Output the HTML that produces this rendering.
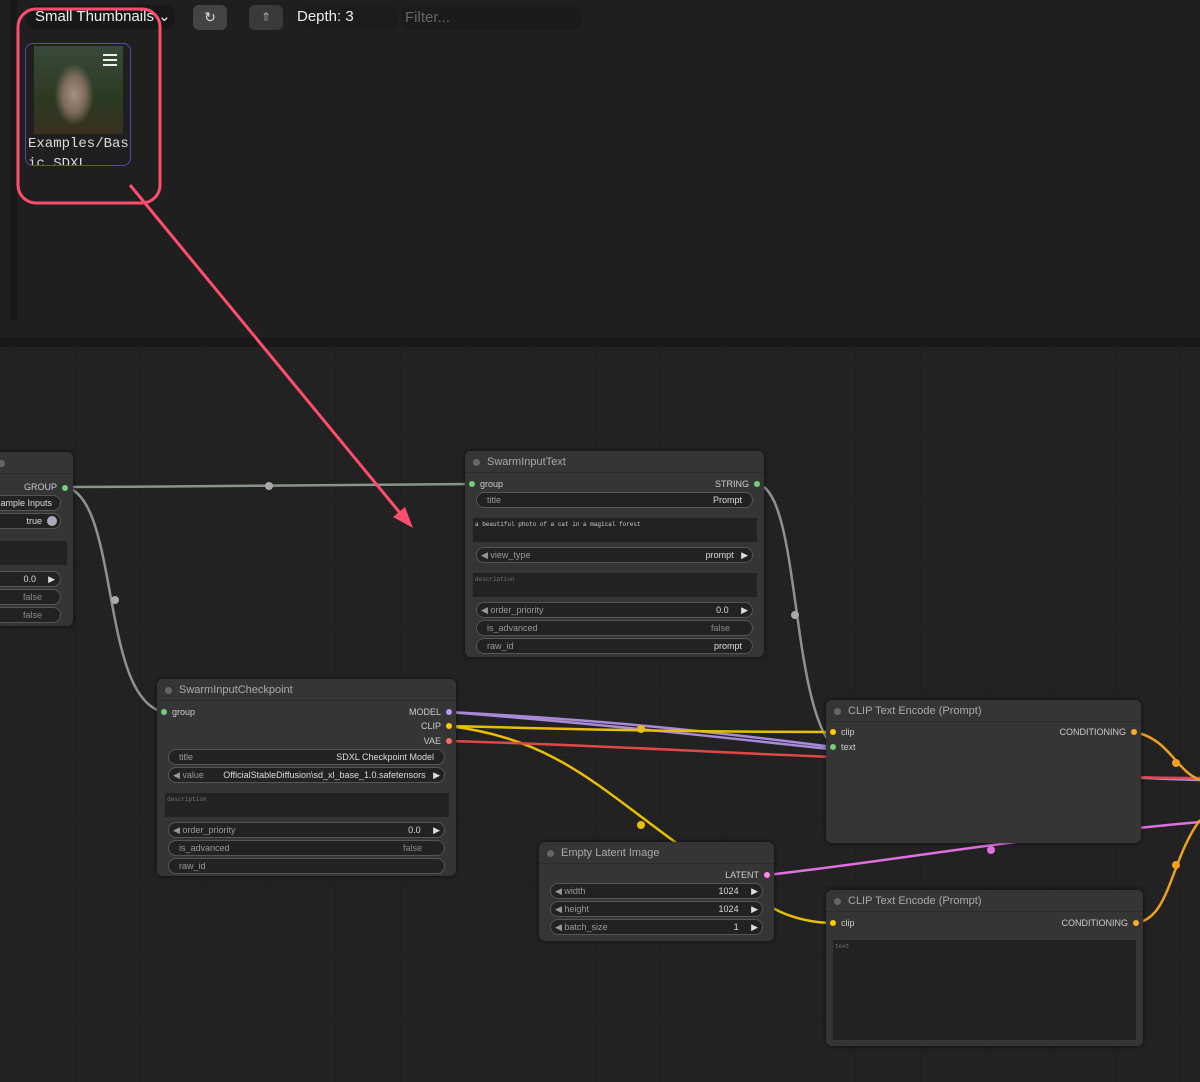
<!DOCTYPE html>
<html><head><meta charset="utf-8"><style>
*{box-sizing:border-box;margin:0;padding:0}
body{width:1200px;height:1082px;overflow:hidden;background:#202020;font-family:"Liberation Sans",sans-serif;position:relative}
.top{position:absolute;left:0;top:0;width:1200px;height:337px;background:#1f1f1f}
.band{position:absolute;left:0;top:337px;width:1200px;height:10px;background:#191919}
.canvas{position:absolute;left:0;top:347px;width:1200px;height:735px;background-color:#222;
background-image:linear-gradient(#1e1e1e 1px,transparent 1px),linear-gradient(90deg,#1e1e1e 1px,transparent 1px);background-size:65px 65px;background-position:10px 20px}
.node{position:absolute;background:#353535;border-radius:6px;box-shadow:0 0 4px #000a}
.tt{height:22px;background:#353535;border-bottom:1px solid #2c2c2c;border-radius:6px 6px 0 0;color:#aaa;font-size:11px;line-height:22px;padding-left:22px;position:relative}
.tt:before{content:"";position:absolute;left:8px;top:8px;width:7px;height:7px;border-radius:50%;background:#666}
.lab{position:absolute;font-size:9px;color:#ccc}
.dot{position:absolute;width:6px;height:6px;border-radius:50%}
.w{position:absolute;height:16px;border:1px solid #555;background:#222;border-radius:8px;font-size:9px;color:#999;line-height:14px;padding:0 10px}
.w b{font-weight:normal;color:#ddd;position:absolute;right:10px;top:0}
.ta{position:absolute;background:#222;font-family:"Liberation Mono",monospace;font-size:6px;color:#ccc;padding:3px 2px}
</style></head><body>
<div class="top"></div>
<div style="position:absolute;left:10px;top:0;width:7px;height:320px;background:#181818"></div>
<div style="position:absolute;left:27px;top:5px;width:148px;height:24px;background:#181818;border-radius:8px;color:#eee;font-size:15px;line-height:24px;padding-left:8px">Small Thumbnails ⌄</div>
<div style="position:absolute;left:193px;top:5px;width:34px;height:25px;background:#444;border-radius:6px;color:#ddd;font-size:14px;text-align:center;line-height:25px">↻</div>
<div style="position:absolute;left:249px;top:5px;width:34px;height:25px;background:#3a3a3a;border-radius:6px;color:#aaa;font-size:12px;text-align:center;line-height:25px">⇑</div>
<div style="position:absolute;left:302px;top:5px;width:96px;height:25px;background:#1c1c1c;border-radius:9px"></div>
<div style="position:absolute;left:297px;top:5px;color:#eee;font-size:15px;line-height:24px">Depth: 3</div>
<div style="position:absolute;left:401px;top:5px;width:180px;height:25px;background:#1b1b1b;border-radius:9px;color:#666;font-size:15px;line-height:25px;padding-left:4px">Filter...</div>
<div style="position:absolute;left:25px;top:43px;width:106px;height:123px;border:1px solid #5a48a8;border-radius:8px;overflow:hidden;background:#1f1f1f">
<div style="position:absolute;left:8px;top:2px;width:89px;height:88px;background:radial-gradient(ellipse 22% 35% at 45% 55%,#a89080 0,#7a6a5a 60%,transparent 100%),linear-gradient(#3a4a3a,#2a3a22 60%,#3a3020)"></div>
<div style="position:absolute;left:77px;top:10px;width:14px;height:12px;border-top:2px solid #eee;border-bottom:2px solid #eee"><div style="margin-top:3px;height:2px;background:#eee"></div></div>
<div style="position:absolute;left:2px;top:90px;font-family:'Liberation Mono',monospace;font-size:14px;color:#ddd;line-height:20px;width:104px;word-break:break-all">Examples/Basic_SDXL</div>
</div>
<div class="band"></div>
<div class="canvas"></div>
<svg style="position:absolute;left:0;top:0" width="1200" height="1082">
<g fill="none" stroke-width="2.5">
<path d="M66 487 C200 487 330 484 472 484" stroke="#8a958a"/>
<path d="M66 487 C120 500 100 700 164 712" stroke="#8a958a"/>
<path d="M757 484 C800 490 790 700 833 747" stroke="#8a958a"/>
<path d="M449 712 C600 720 700 730 833 747" stroke="#a88ad8"/>
<path d="M449 712 C800 740 1000 775 1200 780" stroke="#a88ad8"/>
<path d="M449 726 C600 730 700 732 833 732" stroke="#e8c000"/>
<path d="M449 726 C560 740 600 790 700 860 C760 900 780 922 833 923" stroke="#e8c000"/>
<path d="M449 741 C600 745 700 752 833 757" stroke="#e04848"/>
<path d="M1135 777 C1160 778 1180 778 1200 778" stroke="#e04848"/>
<path d="M767 875 C900 860 1000 840 1200 822" stroke="#e070e0"/>
<path d="M1135 732 C1170 740 1175 770 1200 780" stroke="#f0a020"/>
<path d="M1135 923 C1170 920 1170 860 1200 820" stroke="#f0a020"/>
</g>
<g fill="#aaa"><circle cx="269" cy="486" r="4"/><circle cx="115" cy="600" r="4"/><circle cx="795" cy="615" r="4"/></g>
<circle cx="641" cy="729" r="4" fill="#e8c000"/><circle cx="641" cy="825" r="4" fill="#e8c000"/>
<circle cx="991" cy="850" r="4" fill="#e070e0"/><circle cx="1176" cy="865" r="4" fill="#f0a020"/><circle cx="1176" cy="763" r="4" fill="#f0a020"/>
</svg>
<div class="node" style="left:-10px;top:452px;width:83px;height:174px">
<div class="tt" style="padding:0"></div>
<span class="lab" style="right:16px;top:30px">GROUP</span><span class="dot" style="right:5px;top:33px;background:#7c7"></span>
<div class="w" style="left:0;top:43px;width:71px;padding:0"><b style="right:8px">ample Inputs</b></div>
<div class="w" style="left:0;top:61px;width:71px"><b style="right:18px">true</b><span style="position:absolute;right:3px;top:2px;width:10px;height:10px;border-radius:50%;background:#aab"></span></div>
<div style="position:absolute;left:0;top:89px;width:77px;height:24px;background:#222"></div>
<div class="w" style="left:0;top:119px;width:71px"><b style="right:24px">0.0</b><b style="right:5px">▶</b></div>
<div class="w" style="left:0;top:137px;width:71px"><b style="right:18px;color:#888">false</b></div>
<div class="w" style="left:0;top:155px;width:71px"><b style="right:18px;color:#888">false</b></div>
</div>
<div class="node" style="left:465px;top:451px;width:299px;height:206px">
<div class="tt">SwarmInputText</div>
<span class="dot" style="left:4px;top:30px;background:#7c7"></span><span class="lab" style="left:15px;top:28px">group</span>
<span class="lab" style="right:15px;top:28px">STRING</span><span class="dot" style="right:4px;top:30px;background:#7c7"></span>
<div class="w" style="left:11px;top:41px;width:277px">title<b>Prompt</b></div>
<div class="ta" style="left:8px;top:67px;width:284px;height:24px">a beautiful photo of a cat in a magical forest</div>
<div class="w" style="left:11px;top:96px;width:277px;padding-left:4px">◀ view_type<b style="right:4px">prompt &nbsp; ▶</b></div>
<div class="ta" style="left:8px;top:122px;width:284px;height:24px;color:#777">description</div>
<div class="w" style="left:11px;top:151px;width:277px;padding-left:4px">◀ order_priority<b style="right:4px">0.0 &nbsp; &nbsp; ▶</b></div>
<div class="w" style="left:11px;top:169px;width:277px">is_advanced<b style="right:22px;color:#888">false</b></div>
<div class="w" style="left:11px;top:187px;width:277px">raw_id<b>prompt</b></div>
</div>
<div class="node" style="left:157px;top:679px;width:299px;height:197px">
<div class="tt">SwarmInputCheckpoint</div>
<span class="dot" style="left:4px;top:30px;background:#7c7"></span><span class="lab" style="left:15px;top:28px">group</span>
<span class="lab" style="right:15px;top:28px">MODEL</span><span class="dot" style="right:4px;top:30px;background:#b9e"></span>
<span class="lab" style="right:15px;top:42px">CLIP</span><span class="dot" style="right:4px;top:44px;background:#fc0"></span>
<span class="lab" style="right:15px;top:57px">VAE</span><span class="dot" style="right:4px;top:59px;background:#f66"></span>
<div class="w" style="left:11px;top:70px;width:277px">title<b>SDXL Checkpoint Model</b></div>
<div class="w" style="left:11px;top:88px;width:277px;padding-left:4px">◀ value<b style="right:4px;color:#ddd">OfficialStableDiffusion\sd_xl_base_1.0.safetensors &nbsp; ▶</b></div>
<div class="ta" style="left:8px;top:114px;width:284px;height:24px;color:#777">description</div>
<div class="w" style="left:11px;top:143px;width:277px;padding-left:4px">◀ order_priority<b style="right:4px">0.0 &nbsp; &nbsp; ▶</b></div>
<div class="w" style="left:11px;top:161px;width:277px">is_advanced<b style="right:22px;color:#888">false</b></div>
<div class="w" style="left:11px;top:179px;width:277px">raw_id</div>
</div>
<div class="node" style="left:826px;top:700px;width:315px;height:143px">
<div class="tt">CLIP Text Encode (Prompt)</div>
<span class="dot" style="left:4px;top:29px;background:#fc0"></span><span class="lab" style="left:15px;top:27px">clip</span>
<span class="dot" style="left:4px;top:44px;background:#7c7"></span><span class="lab" style="left:15px;top:42px">text</span>
<span class="lab" style="right:15px;top:27px">CONDITIONING</span><span class="dot" style="right:4px;top:29px;background:#fa3"></span>
</div>
<div class="node" style="left:539px;top:842px;width:235px;height:99px">
<div class="tt">Empty Latent Image</div>
<span class="lab" style="right:15px;top:28px">LATENT</span><span class="dot" style="right:4px;top:30px;background:#f8e"></span>
<div class="w" style="left:11px;top:41px;width:213px;padding-left:4px">◀ width<b style="right:4px">1024 &nbsp; &nbsp; ▶</b></div>
<div class="w" style="left:11px;top:59px;width:213px;padding-left:4px">◀ height<b style="right:4px">1024 &nbsp; &nbsp; ▶</b></div>
<div class="w" style="left:11px;top:77px;width:213px;padding-left:4px">◀ batch_size<b style="right:4px">1 &nbsp; &nbsp; ▶</b></div>
</div>
<div class="node" style="left:826px;top:890px;width:317px;height:156px">
<div class="tt">CLIP Text Encode (Prompt)</div>
<span class="dot" style="left:4px;top:30px;background:#fc0"></span><span class="lab" style="left:15px;top:28px">clip</span>
<span class="lab" style="right:15px;top:28px">CONDITIONING</span><span class="dot" style="right:4px;top:30px;background:#fa3"></span>
<div class="ta" style="left:7px;top:50px;width:303px;height:100px;color:#777">text</div>
</div>
<svg style="position:absolute;left:0;top:0" width="1200" height="1082">
<rect x="18" y="9" width="142" height="194" rx="18" fill="none" stroke="#ff4d6d" stroke-width="3"/>
<line x1="130" y1="185" x2="405" y2="519" stroke="#ff4d6d" stroke-width="3"/>
<polygon points="413,528 393,517 405,507" fill="#ff4d6d"/>
</svg>
</body></html>
